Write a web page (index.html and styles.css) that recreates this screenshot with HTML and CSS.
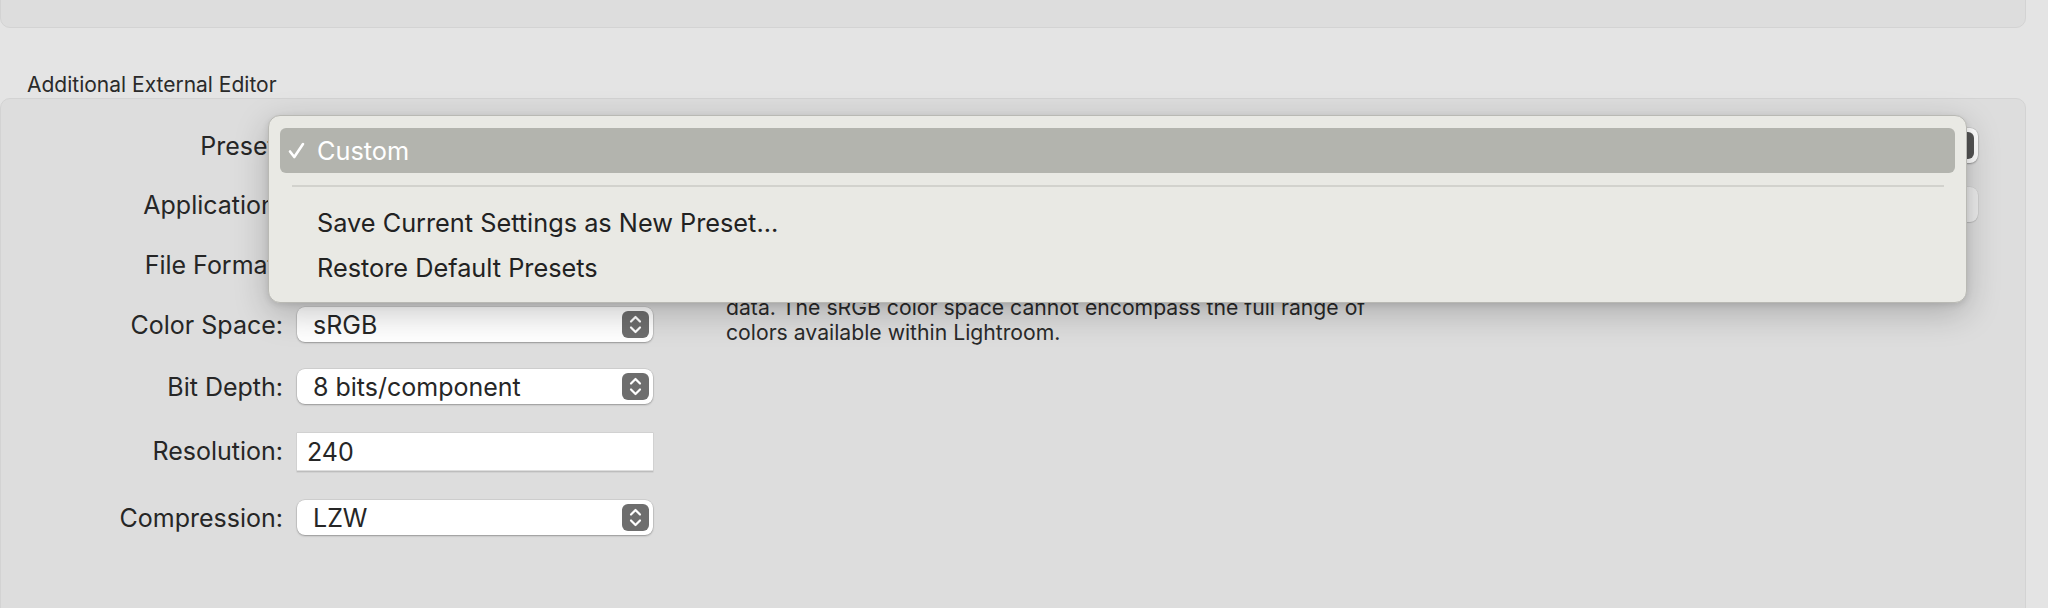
FILE: index.html
```html
<!DOCTYPE html>
<html lang="en">
<head>
<meta charset="utf-8">
<title>Additional External Editor</title>
<link rel="stylesheet" href="styles.css">
</head>
<body>
<div class="window">
  <div class="panel panel-top"></div>
  <div class="group-title">Additional External Editor</div>
  <div class="panel panel-main">
    <div class="form">
      <div class="lbl">Preset:</div>
      <div class="popup span">
        <span class="value">Custom</span>
        <svg class="stepper" viewBox="0 0 27 27" width="27" height="27"><rect width="27" height="27" rx="6" fill="#555"/><path d="M9 10.5 L13.5 6 L18 10.5 M9 16.5 L13.5 21 L18 16.5" fill="none" stroke="#fff" stroke-width="2.2" stroke-linecap="round" stroke-linejoin="round"/></svg>
      </div>

      <div class="lbl">Application:</div>
      <div class="popup span disabled"><span class="value">&lt; not specified &gt;</span></div>

      <div class="lbl">File Format:</div>
      <div class="popup">
        <span class="value">TIFF</span>
        <svg class="stepper" viewBox="0 0 27 27" width="27" height="27"><rect width="27" height="27" rx="6" fill="#6e6e6e"/><path d="M9 10.5 L13.5 6 L18 10.5 M9 16.5 L13.5 21 L18 16.5" fill="none" stroke="#fff" stroke-width="2.2" stroke-linecap="round" stroke-linejoin="round"/></svg>
      </div>

      <p class="note">8-bit files are smaller and more compatible with various programs and<br>plug-ins, but will not preserve fine tonal detail as well as 16-bit<br>data. The sRGB color space cannot encompass the full range of<br>colors available within Lightroom.</p>

      <div class="lbl">Color Space:</div>
      <div class="popup">
        <span class="value">sRGB</span>
        <svg class="stepper" viewBox="0 0 27 27" width="27" height="27"><rect width="27" height="27" rx="6" fill="#6e6e6e"/><path d="M9 10.5 L13.5 6 L18 10.5 M9 16.5 L13.5 21 L18 16.5" fill="none" stroke="#fff" stroke-width="2.2" stroke-linecap="round" stroke-linejoin="round"/></svg>
      </div>

      <div class="lbl">Bit Depth:</div>
      <div class="popup">
        <span class="value">8 bits/component</span>
        <svg class="stepper" viewBox="0 0 27 27" width="27" height="27"><rect width="27" height="27" rx="6" fill="#6e6e6e"/><path d="M9 10.5 L13.5 6 L18 10.5 M9 16.5 L13.5 21 L18 16.5" fill="none" stroke="#fff" stroke-width="2.2" stroke-linecap="round" stroke-linejoin="round"/></svg>
      </div>

      <div class="lbl">Resolution:</div>
      <div class="field">240</div>

      <div class="lbl">Compression:</div>
      <div class="popup">
        <span class="value">LZW</span>
        <svg class="stepper" viewBox="0 0 27 27" width="27" height="27"><rect width="27" height="27" rx="6" fill="#6e6e6e"/><path d="M9 10.5 L13.5 6 L18 10.5 M9 16.5 L13.5 21 L18 16.5" fill="none" stroke="#fff" stroke-width="2.2" stroke-linecap="round" stroke-linejoin="round"/></svg>
      </div>
    </div>
  </div>

  <div class="menu">
    <div class="menu-item selected">
      <svg class="check" viewBox="0 0 17 17" width="17" height="17"><path d="M2 9.5 L6.3 15 L15 2" fill="none" stroke="#fff" stroke-width="2.6" stroke-linecap="round" stroke-linejoin="round"/></svg>
      <span>Custom</span>
    </div>
    <div class="menu-sep"></div>
    <div class="menu-item"><span>Save Current Settings as New Preset...</span></div>
    <div class="menu-item"><span>Restore Default Presets</span></div>
  </div>
</div>
</body>
</html>
```

FILE: styles.css
```css
html, body {
  margin: 0;
  padding: 0;
}

body {
  width: 2048px;
  height: 608px;
  overflow: hidden;
  background: #e4e4e4;
  font-family: Inter, "Noto Sans", "Liberation Sans", sans-serif;
  color: #262626;
}

.window {
  position: relative;
  display: flow-root;
  width: 2048px;
  height: 608px;
  overflow: hidden;
}

.panel {
  box-sizing: border-box;
  width: 2026px;
  background: #dddddd;
  border: 1px solid #d3d3d3;
  border-radius: 10px;
}

.panel-top {
  height: 40px;
  margin-top: -12px;
}

.group-title {
  margin: 44px 0 0 27px;
  height: 26px;
  line-height: 26px;
  font-size: 21px;
  color: #2a2a2a;
}

.panel-main {
  height: 560px;
  padding: 29px 47px 0 0;
}

.form {
  display: grid;
  grid-template-columns: 282px 356px 1fr;
  grid-template-rows: 59px 60px 60px 62px 64px 67px 40px;
  column-gap: 14px;
}

.lbl {
  grid-column: 1;
  align-self: start;
  height: 36px;
  line-height: 36px;
  text-align: right;
  font-size: 25px;
  color: #262626;
  white-space: nowrap;
}

.popup {
  grid-column: 2;
  align-self: start;
  box-sizing: border-box;
  height: 35px;
  display: flex;
  align-items: center;
  justify-content: space-between;
  padding: 0 4px 0 16px;
  background: #ffffff;
  border-radius: 8px;
  box-shadow: 0 0 0 0.5px rgba(0, 0, 0, 0.12), 0 1px 2px rgba(0, 0, 0, 0.28);
  font-size: 25px;
  color: #262626;
}

.popup.span {
  grid-column: 2 / 4;
}

.popup.disabled {
  background: #ececec;
  color: #9a9a9a;
  box-shadow: 0 0 0 0.5px rgba(0, 0, 0, 0.08), 0 1px 1px rgba(0, 0, 0, 0.12);
}

.stepper {
  display: block;
  flex: none;
}

.field {
  grid-column: 2;
  align-self: start;
  box-sizing: border-box;
  height: 39px;
  line-height: 38px;
  padding-left: 10px;
  background: #ffffff;
  box-shadow: inset 0 -1.5px 0 #bdbdbd, 0 0 0 0.5px rgba(0, 0, 0, 0.1);
  font-size: 25px;
  color: #262626;
}

.note {
  grid-column: 3;
  grid-row: 3 / 8;
  align-self: start;
  margin: -2px 0 0 59px;
  font-size: 21.2px;
  line-height: 25px;
  color: #2a2a2a;
  white-space: nowrap;
}

.menu {
  position: absolute;
  left: 268px;
  top: 115px;
  box-sizing: border-box;
  width: 1699px;
  padding: 12px 11px;
  background: #e9e9e4;
  border: 1px solid #b9b9b4;
  border-radius: 12px;
  box-shadow: 0 10px 34px rgba(0, 0, 0, 0.22), 0 2px 6px rgba(0, 0, 0, 0.1);
}

.menu-item {
  height: 45px;
  display: flex;
  align-items: center;
  padding-left: 37px;
  font-size: 25.3px;
  color: #222222;
  border-radius: 6px;
}

.menu-item.selected {
  padding-left: 8px;
  background: #b3b4ae;
  color: #ffffff;
}

.menu-item .check {
  display: block;
  width: 17px;
  height: 17px;
  margin-right: 12px;
}

.menu-sep {
  height: 2px;
  margin: 12px 11px 13px 12px;
  background: #d2d2cd;
}
```
